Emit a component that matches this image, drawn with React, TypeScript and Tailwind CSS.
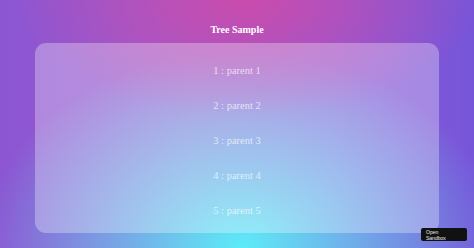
export default function App() {
  const items = [1, 2, 3, 4, 5];
  return (
    <div
      className="relative w-[474px] h-[248px] overflow-hidden flex flex-col items-center bg-[#8a57d4]"
      style={{
        backgroundImage:
          "radial-gradient(ellipse 230px 120px at 52% 0%, rgba(204,74,170,0.95), rgba(204,74,170,0) 100%), radial-gradient(ellipse 260px 200px at 51% 100%, rgba(92,236,248,1) 0%, rgba(92,236,248,0.6) 40%, rgba(92,236,248,0) 100%), linear-gradient(90deg, #8c55d2 0%, #9a5ccf 40%, #8d5ad6 70%, #7755d8 100%)",
        fontFamily: '"Liberation Serif", "DejaVu Serif", serif',
      }}
    >
      <div className="h-[43px] flex items-end justify-center pb-[6px]">
        <h1 className="text-[10px] font-bold text-white">Tree Sample</h1>
      </div>
      <div className="w-[404px] h-[190px] rounded-[11px] bg-white/30 pt-[10px]">
        {items.map((n) => (
          <div key={n} className="h-[35px] flex items-center justify-center text-[10.5px] text-white/70">
            {n} : parent {n}
          </div>
        ))}
      </div>
      <a
        className="absolute left-[421px] top-[228px] w-[46px] h-[13px] bg-[#111] rounded-[2px] px-[5px] text-[5px] leading-[6px] text-white/90 pt-[1px]"
        style={{ fontFamily: '"Liberation Sans", Arial, sans-serif' }}
      >
        Open
        <br />
        Sandbox
      </a>
    </div>
  );
}
